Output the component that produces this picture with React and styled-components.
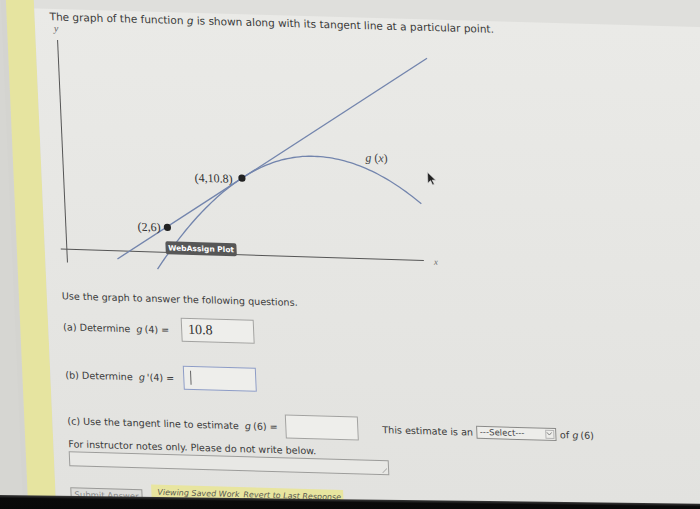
import styled, { createGlobalStyle } from "styled-components";

const GlobalStyle = createGlobalStyle`
  html, body {
    margin: 0;
    padding: 0;
    overflow: hidden;
    background: #d6d6d2;
  }
  body {
    font-family: "DejaVu Sans", Verdana, sans-serif;
    color: #3a3a3a;
  }
`;

// the reference is a photo of a monitor, so the whole page is sheared a little
const Viewport = styled.div`
  position: relative;
  width: 700px;
  height: 509px;
  overflow: hidden;
  background: #d6d6d2;
`;

const Sheet = styled.div`
  display: flex;
  width: 760px;
  height: 570px;
  transform-origin: 0 0;
  transform: matrix(1, 0.028, 0.044, 1, 0, -20);
`;

const Edge = styled.div`
  width: 5px;
  background: #d4d4d0;
`;

const Stripe = styled.div`
  width: 28px;
  background: #e6e4a0;
`;

const Main = styled.div`
  flex: 1;
  display: flex;
  flex-direction: column;
  align-items: flex-start;
  padding: 29px 0 0 15px;
  background: linear-gradient(180deg, #dfdfdc 0px, #dfdfdc 27px, #eaeae7 28px, #e1e1de 100%);
  font-size: 9.6px;
`;

const Title = styled.p`
  margin: 0;
  font-size: 10.5px;
  line-height: 13px;
  white-space: nowrap;
`;

const Var = styled.i`
  font-style: italic;
  margin-right: ${(p) => (p.$tight ? 0 : 2)}px;
`;

const GraphWrap = styled.div`
  position: relative;
  width: 392px;
  height: 250px;
`;

const Badge = styled.span`
  position: absolute;
  left: 106px;
  top: 215px;
  width: 71px;
  height: 13px;
  box-sizing: border-box;
  display: flex;
  align-items: center;
  justify-content: center;
  background: #575757;
  border-radius: 2px;
  color: #fff;
  font-size: 7.5px;
  font-weight: bold;
`;

const Prompt = styled.p`
  margin: 16px 0 0;
  line-height: 14px;
  white-space: nowrap;
`;

const Row = styled.div`
  display: flex;
  align-items: center;
  margin-top: ${(p) => p.$mt}px;
  white-space: nowrap;
`;

const Label = styled.span`
  width: ${(p) => p.$w}px;
`;

const AnswerBox = styled.div`
  width: 73px;
  height: 24px;
  box-sizing: border-box;
  display: flex;
  align-items: center;
  padding-left: 6px;
  border: ${(p) => (p.$focused ? "1.5px solid #8d9cc6" : "1px solid #a2a2a0")};
  background: #eeeeeb;
  font-family: "Liberation Serif", "Times New Roman", serif;
  font-size: 14px;
  color: #333;
`;

const Caret = styled.span`
  width: 1px;
  height: 14px;
  background: #666;
`;

const Estimate = styled.span`
  margin-left: 24px;
  margin-right: 3px;
`;

const SelectBox = styled.div`
  width: 80px;
  height: 13px;
  box-sizing: border-box;
  display: flex;
  align-items: center;
  justify-content: space-between;
  padding: 0 1px 0 3px;
  border: 1px solid #8a8a88;
  background: #ededea;
  font-size: 8.5px;
  color: #444;
`;

const Chevron = styled.span`
  width: 9px;
  height: 9px;
  display: flex;
  align-items: center;
  justify-content: center;
  border: 1px solid #b5b5b5;
  box-sizing: border-box;
`;

const OfText = styled.span`
  margin-left: 4px;
`;

const Notes = styled.p`
  margin: 5px 0 0;
  line-height: 14px;
  white-space: nowrap;
`;

const NotesArea = styled.div`
  position: relative;
  width: 320px;
  height: 15px;
  box-sizing: border-box;
  border: 1px solid #9c9c9a;
  background: #e8e8e5;
`;

const Grip = styled.span`
  position: absolute;
  right: 1px;
  bottom: 1px;
  width: 5px;
  height: 5px;
  background: linear-gradient(135deg, transparent 45%, #888 50%, transparent 60%);
`;

const Footer = styled.div`
  display: flex;
  align-items: flex-start;
  gap: 9px;
  margin-top: 16px;
`;

const SubmitButton = styled.button`
  margin-top: 5px;
  width: 72px;
  height: 14px;
  padding: 0;
  border: 1px solid #9a9a98;
  background: #dcdcd9;
  font-family: "DejaVu Sans", sans-serif;
  font-size: 8.5px;
  color: #8a8a8a;
`;

const Notice = styled.div`
  width: 186px;
  height: 15px;
  display: flex;
  align-items: center;
  padding-left: 6px;
  background: #e8e59f;
  font-size: 8px;
  font-style: italic;
  color: #5a5a50;
  white-space: nowrap;
`;

const Revert = styled.span`
  margin-left: 4px;
  text-decoration: underline;
`;

const Bezel = styled.div`
  position: absolute;
  left: -10px;
  top: 495px;
  width: 740px;
  height: 40px;
  transform-origin: 0 0;
  transform: rotate(0.7deg);
  background: linear-gradient(180deg, #3a3a3a 0px, #0a0a0a 3px, #050505 100%);
`;

// parabola through the tangent point (233.5, 171.5) with vertex at (306, 147.7)
const curvePoints = () => {
  const pts = [];
  for (let x = 145; x <= 412; x += 3) {
    const k = x < 306 ? 0.00453 : 0.00396;
    pts.push(`${x},${(147.7 + k * (x - 306) ** 2).toFixed(1)}`);
  }
  return pts.join(" ");
};

const Graph = () => (
  <svg width="392" height="250" viewBox="48 22 392 250" style={{ display: "block" }}>
    <text x="54" y="30" fontFamily="Liberation Serif, serif" fontStyle="italic" fontSize="10" fill="#666" textAnchor="middle">
      y
    </text>
    <line x1="55" y1="38.4" x2="55.1" y2="261" stroke="#555" strokeWidth="1" />
    <line x1="49" y1="247.6" x2="412" y2="249" stroke="#555" strokeWidth="1" />
    <text x="424" y="253" fontFamily="Liberation Serif, serif" fontStyle="italic" fontSize="9" fill="#666" textAnchor="middle">
      x
    </text>
    <line x1="105.3" y1="256" x2="424.1" y2="46.4" stroke="#7385ad" strokeWidth="1.3" />
    <polyline points={curvePoints()} fill="none" stroke="#7385ad" strokeWidth="1.3" />
    <circle cx="156.7" cy="223" r="3.6" fill="#222" />
    <circle cx="233.5" cy="171.5" r="3.6" fill="#222" />
    <text x="150" y="227" fontFamily="Liberation Serif, serif" fontSize="12" fill="#333" textAnchor="end">
      (2,6)
    </text>
    <text x="224" y="176.5" fontFamily="Liberation Serif, serif" fontSize="12" fill="#333" textAnchor="end">
      (4,10.8)
    </text>
    <text x="358" y="151.5" fontFamily="Liberation Serif, serif" fontSize="12" fill="#444">
      <tspan fontStyle="italic">g</tspan> (<tspan fontStyle="italic">x</tspan>)
    </text>
    <path
      d="M419.5 160.5 L419.5 171.5 L422.2 168.8 L424.2 173 L425.8 172.3 L423.9 168.2 L427.4 168.2 Z"
      fill="#222"
      stroke="#ddd"
      strokeWidth="0.6"
    />
  </svg>
);

const App = () => (
  <Viewport>
    <GlobalStyle />
    <Sheet>
      <Edge />
      <Stripe />
      <Main>
        <Title>
          The graph of the function <Var $tight>g</Var> is shown along with its tangent line at a particular point.
        </Title>
        <GraphWrap>
          <Graph />
          <Badge>WebAssign Plot</Badge>
        </GraphWrap>
        <Prompt>Use the graph to answer the following questions.</Prompt>
        <Row $mt={11}>
          <Label $w={118}>
            (a) Determine&nbsp; <Var>g</Var>(4) =
          </Label>
          <AnswerBox>10.8</AnswerBox>
        </Row>
        <Row $mt={24}>
          <Label $w={118}>
            (b) Determine&nbsp; <Var>g</Var>'(4) =
          </Label>
          <AnswerBox $focused>
            <Caret />
          </AnswerBox>
        </Row>
        <Row $mt={22}>
          <Label $w={218}>
            (c) Use the tangent line to estimate&nbsp; <Var>g</Var>(6) =
          </Label>
          <AnswerBox />
          <Estimate>This estimate is an</Estimate>
          <SelectBox>
            ---Select---
            <Chevron>
              <svg width="6" height="4" viewBox="0 0 6 4">
                <path d="M0.5 0.5 L3 3.2 L5.5 0.5" fill="none" stroke="#777" strokeWidth="0.9" />
              </svg>
            </Chevron>
          </SelectBox>
          <OfText>
            of <Var>g</Var>(6)
          </OfText>
        </Row>
        <Notes>For instructor notes only. Please do not write below.</Notes>
        <NotesArea>
          <Grip />
        </NotesArea>
        <Footer>
          <SubmitButton>Submit Answer</SubmitButton>
          <Notice>
            Viewing Saved Work <Revert>Revert to Last Response</Revert>
          </Notice>
        </Footer>
      </Main>
    </Sheet>
    <Bezel />
  </Viewport>
);

export default App;
